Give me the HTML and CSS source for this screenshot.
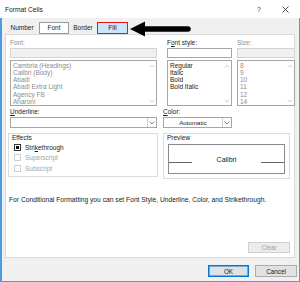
FILE: index.html
```html
<!DOCTYPE html>
<html>
<head>
  <meta charset="UTF-8" />
  <title>Format Cells</title>
  <link rel="stylesheet" href="styles.css">
</head>
<body>
  <div class='window'>
    <div class='titlebar'>
      <span class='title'>Format Cells</span>
      <span class='help'>?</span>
      <svg class='close' width="7" height="7" viewBox="0 0 7 7">
        <path d="M0.5 0.5L6.5 6.5M6.5 0.5L0.5 6.5" stroke="#222" stroke-width="0.8"></path>
      </svg>
    </div>

    <div class='tabs'>
      <span class='tab'>Number</span>
      <span class='tab active'>Font</span>
      <span class='tab'>Border</span>
      <span class='tab fill'>Fill</span>
      <svg class='arrow' width="62" height="16" viewBox="0 0 62 16">
        <polygon points="0,8 15,0.5 15,15.5" fill="#000"></polygon>
        <path d="M14 8H58" stroke="#000" stroke-width="5.5" stroke-linecap="round"></path>
      </svg>
    </div>

    <div class='panel'>
      <div class='fontRow'>
        <div class='field'>
          <label class='muted'>Font:</label>
          <div class='input disabled'></div>
          <div class='list muted'>
            <ul>
              <li>Cambria (Headings)</li>
              <li>Calibri (Body)</li>
              <li>Abadi</li>
              <li>Abadi Extra Light</li>
              <li>Agency FB</li>
              <li>Aharoni</li>
            </ul>
            <div class='scroll'>
              <svg width="6" height="4" viewBox="0 0 6 4"><path d="M0.5 3.5L3 1L5.5 3.5" stroke="#c4c4c4" stroke-width="0.8" fill="none"></path></svg>
              <svg width="6" height="4" viewBox="0 0 6 4"><path d="M0.5 0.5L3 3L5.5 0.5" stroke="#c4c4c4" stroke-width="0.8" fill="none"></path></svg>
            </div>
          </div>
        </div>

        <div class='field'>
          <label>F<u>o</u>nt style:</label>
          <div class='input'></div>
          <div class='list'>
            <ul>
              <li>Regular</li>
              <li>Italic</li>
              <li>Bold</li>
              <li>Bold Italic</li>
            </ul>
            <div class='scroll'>
              <svg width="6" height="4" viewBox="0 0 6 4"><path d="M0.5 3.5L3 1L5.5 3.5" stroke="#c4c4c4" stroke-width="0.8" fill="none"></path></svg>
              <svg width="6" height="4" viewBox="0 0 6 4"><path d="M0.5 0.5L3 3L5.5 0.5" stroke="#c4c4c4" stroke-width="0.8" fill="none"></path></svg>
            </div>
          </div>
        </div>

        <div class='field'>
          <label class='muted'>Size:</label>
          <div class='input disabled'></div>
          <div class='list muted'>
            <ul>
              <li>8</li>
              <li>9</li>
              <li>10</li>
              <li>11</li>
              <li>12</li>
              <li>14</li>
            </ul>
            <div class='scroll'>
              <svg width="6" height="4" viewBox="0 0 6 4"><path d="M0.5 3.5L3 1L5.5 3.5" stroke="#c4c4c4" stroke-width="0.8" fill="none"></path></svg>
              <svg width="6" height="4" viewBox="0 0 6 4"><path d="M0.5 0.5L3 3L5.5 0.5" stroke="#c4c4c4" stroke-width="0.8" fill="none"></path></svg>
            </div>
          </div>
        </div>
      </div>

      <div class='optionRow'>
        <div class='field'>
          <label><u>U</u>nderline:</label>
          <div class='select'>
            <span class='value'></span>
            <span class='drop'>
              <svg width="6" height="4" viewBox="0 0 6 4"><path d="M0.5 0.5L3 3L5.5 0.5" stroke="#666" stroke-width="0.8" fill="none"></path></svg>
            </span>
          </div>
        </div>

        <div class='field colorField'>
          <label><u>C</u>olor:</label>
          <div class='select'>
            <span class='value'>Automatic</span>
            <span class='drop'>
              <svg width="6" height="4" viewBox="0 0 6 4"><path d="M0.5 0.5L3 3L5.5 0.5" stroke="#666" stroke-width="0.8" fill="none"></path></svg>
            </span>
          </div>
        </div>

        <div class='group effects'>
          <p class='groupTitle'>Effects</p>
          <div class='check'><span class='box checked'></span><span>Stri<u>k</u>ethrough</span></div>
          <div class='check off'><span class='box'></span><span>Superscript</span></div>
          <div class='check off'><span class='box'></span><span>Subscript</span></div>
        </div>

        <div class='group preview'>
          <p class='groupTitle'>Preview</p>
          <div class='previewBox'>
            <span class='pline'></span>
            <span class='sample'>Calibri</span>
            <span class='pline'></span>
          </div>
        </div>
      </div>

      <p class='note'>For Conditional Formatting you can set Font Style, Underline, Color, and Strikethrough.</p>

      <div class='clearRow'>
        <button class='btn disabled'>Clear</button>
      </div>
    </div>

    <div class='actions'>
      <button class='btn ok'>OK</button>
      <button class='btn'>Cancel</button>
    </div>
  </div>
</body>
</html>
```

FILE: styles.css
```css
body {
  margin: 0;
  font-family: "Liberation Sans", Arial, sans-serif;
  font-size: 6.5px;
  color: #1a1a1a;
}

.window {
  width: 300px;
  height: 282px;
  box-sizing: border-box;
  background-color: #f0f0f0;
  border-left: 2px solid #4d9be0;
  border-right: 1px solid #4d9be0;
  border-bottom: 1px solid #4d9be0;
}

.titlebar {
  height: 18px;
  background-color: #fff;
  display: flex;
  align-items: center;
  padding-left: 3px;
  margin-left: -2px;
  margin-right: -1px;
  padding-right: 11px;
}

.title {
  font-size: 6.7px;
  padding-left: 2px;
}

.help {
  margin-left: auto;
  margin-right: 21px;
  font-size: 7px;
  color: #333;
}

.tabs {
  display: flex;
  align-items: center;
  height: 12px;
  margin-top: 4px;
  padding-left: 3px;
}

.tab {
  box-sizing: border-box;
  height: 12px;
  line-height: 12px;
  text-align: center;
}

.tab:nth-child(1) {
  width: 34px;
}

.tab.active {
  width: 30px;
  background-color: #fff;
  border: 1px solid #9a9a9a;
  line-height: 10px;
}

.tab:nth-child(3) {
  width: 28px;
}

.tab.fill {
  width: 31px;
  background-color: #cde5f8;
  border: 1.5px solid #e8111d;
  line-height: 9px;
}

.arrow {
  margin-left: 2px;
  margin-top: 1px;
}

.panel {
  box-sizing: border-box;
  width: 290px;
  height: 224px;
  margin-left: 3px;
  background-color: #fff;
  border: 1px solid #d9d9d9;
  padding: 4px 4px 4px 4px;
  display: flex;
  flex-direction: column;
}

label {
  display: block;
  height: 8px;
  line-height: 8px;
}

.muted {
  color: #8c8c8c;
}

.fontRow {
  display: grid;
  grid-template-columns: 147px 65px 53px;
  column-gap: 10px;
}

.fontRow .field:nth-child(3) {
  margin-left: -5px;
}

.input {
  box-sizing: border-box;
  height: 10px;
  margin-top: 1px;
  border: 1px solid #a6a6a6;
  background-color: #fff;
}

.input.disabled {
  background-color: #f0f0f0;
  border-color: #d4d4d4;
}

.list {
  box-sizing: border-box;
  height: 46px;
  margin-top: 2px;
  border: 1px solid #a6a6a6;
  display: flex;
}

.list ul {
  flex: 1;
  list-style: none;
  margin: 0;
  padding: 0.5px 0 0 2px;
}

.list li {
  height: 7.3px;
  line-height: 7.3px;
  white-space: nowrap;
}

.scroll {
  width: 8px;
  display: flex;
  flex-direction: column;
  justify-content: space-between;
  align-items: center;
  padding: 3px 0 2px 0;
}

.optionRow {
  display: grid;
  grid-template-columns: 147px 127px;
  column-gap: 6px;
  margin-top: 2px;
}

.colorField {
  width: 69px;
}

.select {
  box-sizing: border-box;
  height: 11px;
  margin-top: 1px;
  border: 1px solid #a6a6a6;
  display: flex;
}

.select .value {
  flex: 1;
  text-align: center;
  line-height: 9px;
  font-size: 6.2px;
}

.select .drop {
  width: 8px;
  border-left: 1px solid #d0d0d0;
  display: flex;
  align-items: center;
  justify-content: center;
}

.group {
  box-sizing: border-box;
  margin-top: 5px;
  border: 1px solid #dcdcdc;
}

.effects {
  margin-left: -2px;
  margin-right: -1px;
  height: 44px;
}

.preview {
  height: 46px;
}

.groupTitle {
  margin: 0;
  padding-left: 3px;
  height: 8px;
  line-height: 7px;
}

.check {
  display: flex;
  align-items: center;
  height: 10.5px;
  padding-left: 5px;
  gap: 4px;
}

.check.off {
  color: #a6a6a6;
}

.box {
  box-sizing: border-box;
  width: 7px;
  height: 7px;
  border: 1px solid #cfcfcf;
  display: flex;
  align-items: center;
  justify-content: center;
}

.box.checked {
  border-color: #333;
}

.box.checked::after {
  content: '';
  width: 3px;
  height: 3px;
  background-color: #111;
}

.previewBox {
  box-sizing: border-box;
  height: 30px;
  margin: 2px 4px 0 4px;
  border: 1px solid #8a8a8a;
  display: flex;
  align-items: center;
}

.pline {
  width: 23px;
  height: 1px;
  background-color: #666;
  margin-top: 6px;
}

.sample {
  flex: 1;
  text-align: center;
  font-size: 7px;
}

.note {
  margin: 17px 0 0 -1px;
  font-size: 6.7px;
  line-height: 8px;
  white-space: nowrap;
}

.clearRow {
  margin-top: auto;
  display: flex;
  justify-content: flex-end;
}

.btn {
  box-sizing: border-box;
  height: 11px;
  padding: 0;
  margin: 0;
  font-family: inherit;
  font-size: 6.3px;
  background-color: #e1e1e1;
  border: 1px solid #adadad;
  color: #1a1a1a;
}

.clearRow .btn {
  width: 42px;
}

.btn.disabled {
  color: #a0a0a0;
  border-color: #d0d0d0;
  background-color: #ececec;
}

.actions {
  display: flex;
  justify-content: flex-end;
  gap: 6px;
  margin-top: 7px;
  padding-right: 2px;
}

.actions .btn {
  height: 12px;
  width: 42px;
}

.actions .btn.ok {
  width: 41px;
  border: 1px solid #0078d7;
  box-shadow: inset 0 0 0 0.5px #0078d7;
}
```
